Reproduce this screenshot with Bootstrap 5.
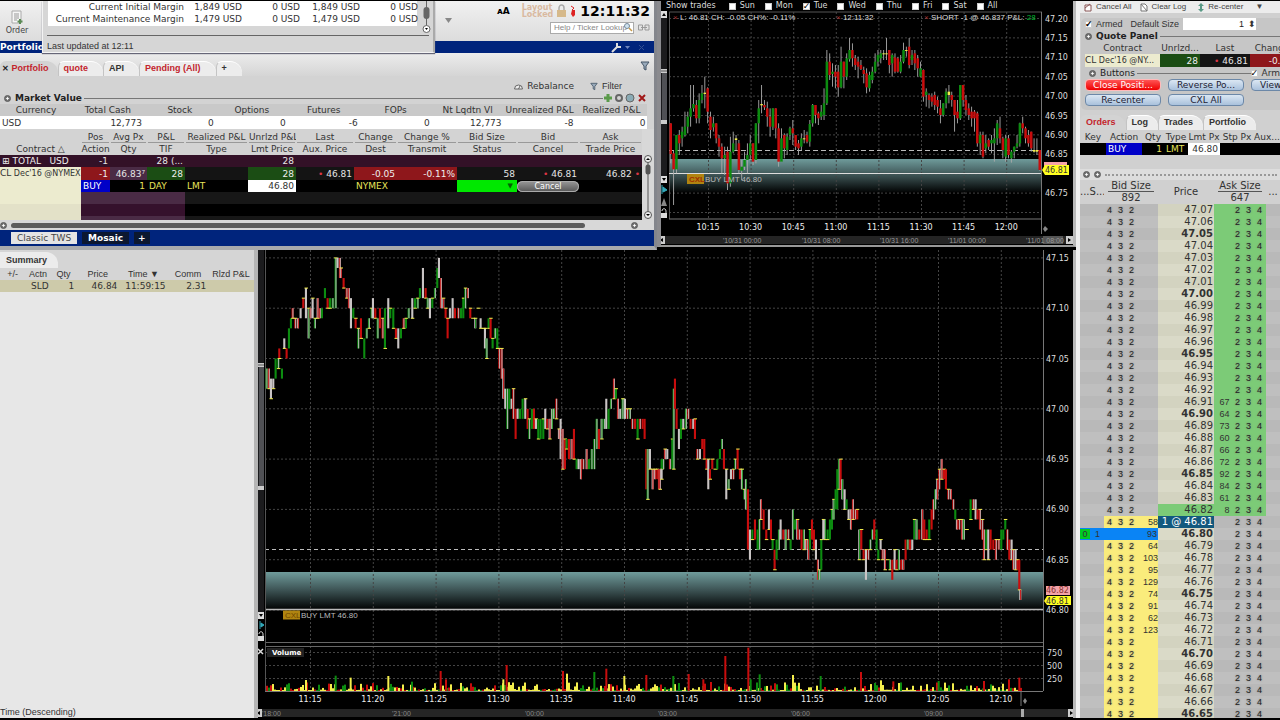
<!DOCTYPE html>
<html lang="en">
<head>
<meta charset="utf-8">
<meta name="viewport" content="width=device-width, initial-scale=1">
<title>Trader Workstation</title>
<link rel="stylesheet" href="https://cdn.jsdelivr.net/npm/bootstrap@5.3.0/dist/css/bootstrap.min.css">
<style>
body{background:#000;color:#333;font:9px/12px "DejaVu Sans",sans-serif;overflow:hidden}
.arial{font-family:"Liberation Sans",Arial,sans-serif}
.desk{display:grid;grid-template-columns:1076fr 204fr;height:100vh;padding:1px 0 2px}
.work-area{min-width:0}
.top-area{display:grid;grid-template-columns:657fr 419fr}
.low-area{display:grid;grid-template-columns:254fr 822fr;flex:1;min-height:0}
table{table-layout:fixed;width:100%;border-collapse:collapse}
th{font-weight:400;text-align:center}
td,th{padding:0 2px;white-space:nowrap;overflow:hidden;line-height:12px}
td{text-align:right}
button,input{font:inherit}
svg{display:block}
/* portfolio window */
.folio{background:#d3d3d3;border-right:3px solid #84868c;border-bottom:4px solid #a9abad;height:249px}
.toolbar-top{height:40px;background:linear-gradient(#f1f1f1,#dcdcdc)}
.order-btn{width:34px;border:0;background:none;padding:5px 0 0;font-size:8px;color:#444}
.clock{font-size:14px;font-weight:700;line-height:20px;color:#000}
.locked{font-size:8px;line-height:7px;font-weight:700;color:#d9b9a0}
.help-box{width:84px;height:12px;border:1px solid #aaa;background:#fff;font-size:8px;line-height:10px;padding:0 3px;color:#777}
.help-box::placeholder{color:#888;opacity:1}
.blue-bar{background:#00247c;color:#fff;height:12px;line-height:13px}
.popup-box{left:42px;top:0;width:393px;height:52px;background:#d6d6d6;border:1px solid #f3f3f3;border-top:0;border-right:2px solid #aaa;box-shadow:0 1px 1px #667;z-index:2}
.popup-sheet{background:#fff;margin:0 16px 0 5px;height:25px}
.popup-sheet table{width:372px}
.popup-line{border-top:1px solid #666;margin:9px 4px 0 4px}
.tabstrip{height:23px;background:linear-gradient(#ececec,#d5d5d5);padding-top:8px}
.tab-link{background:#ececec;color:#333;font-weight:700;text-decoration:none;border-radius:6px 12px 0 0;padding:0 15px 0 5px;height:15px;line-height:13px;border-top:1px solid #fff;border-left:1px solid #c4c4c4}
.tab-link.on{background:#d3d3d3;color:#c3242c;padding:0 9px 0 1px;border-color:transparent}
.tab-link.hot{color:#c3242c}
.tab-x{font-size:8px;color:#222}
.heading-line{font-size:9px;font-weight:700;color:#222;height:12px;line-height:12px}
.heading-line::after{content:"";flex:1;height:1px;background:#777;margin-left:2px}
.dot-btn{width:7px;height:7px;border:1px solid #555;border-radius:50%;background:radial-gradient(#fff 25%,#777 40%);flex:none;padding:0}
.market{width:99%}
.market th{background:#c9c9c9}
.market td{background:#fff;height:13px}
.market td:first-child{text-align:left}
.util-row{height:16px}
.split span{display:block;border-bottom:1px solid #999;height:12px;margin:0 1px}
.split th{padding:0;height:26px;vertical-align:bottom}
.holdings td{height:12px;line-height:12px;color:#e6e6e6;background:#141414}
.holdings .total td{background:#331127}
.holdings .blank td{background:#171717}
.holdings .deep td{background:#000}
.holdings .total td:first-child{text-align:left;color:#eee}
.holdings .cream{background:#ecebcf!important;color:#333!important;text-align:left!important;font-size:8px;padding:0}
.holdings .deep .cream,.holdings .short .cream{background:#e3e1c8!important}
.cream span{font-size:9px}
.holdings .plum{background:#4a2b45!important}
.holdings .deep .plum{background:#35112c!important}
.holdings .short td{height:4px;line-height:4px}
.loss{background:#8e171b!important;color:#eee!important}
.gain{background:#1b4d14!important;color:#eee!important}
.buy{background:#0000c8!important;color:#fff!important;text-align:left!important}
.holdings .ylw td,.ylw td{background:#000;color:#e7e35a;text-align:left}
.paper{background:#fff!important;color:#333!important;text-align:right!important}
.pill{border:0;border-radius:7px;background:linear-gradient(#999,#555);box-shadow:inset 0 0 0 1px #aaa;color:#fff;font-size:8px;line-height:11px;width:100%;height:11px;padding:0;display:block}
.status-select{appearance:none;border:0;background:#00e800;width:100%;height:12px;display:block;padding:0}
.status-cell::after{content:"▼";position:absolute;right:4px;top:0;font-size:7px;color:#056005}
.vbar{width:12px;background:#d8d8d8;flex:none}
.hbar{height:10px;background:#d8d8d8}
.hbar i{height:5px;border-radius:3px;background:#5c5c5c;margin-right:7%}
.space-bar{background:#00247c;height:16px;padding:2px 0 0 11px}
.space-bar a{height:12px;line-height:12px;padding:0 6px;text-decoration:none;background:#e4e4e4;color:#444;margin-right:5px}
.space-bar a.dark{background:#0c1830;color:#fff;font-weight:700}
/* charts */
.chart-pane{background:#000;border-left:4px solid #8b8b8f}
.small-chart{border-right:3px solid #b9b9b9;border-bottom:2px solid #999;height:246px}
.days{height:10px;color:#ddd;font-size:8px;line-height:10px;padding-left:5px;gap:10px}
.days label{display:flex;gap:4px;align-items:center}
.days label:first-of-type{margin-left:3px}
input[type=checkbox]{appearance:none;width:7px;height:7px;background:#fff;margin:0;line-height:7px;font-size:9px;color:#000;border:1px solid #ccc;flex:none}
input[type=checkbox]:checked::before{content:"✓";display:block;margin:-1px 0 0 -1px;font-weight:700}
.big-chart{border-left:4px solid #b5b5b5;border-right:3px solid #b9b9b9}
svg text{font-family:"DejaVu Sans",sans-serif;font-size:8px}
svg .a{font-family:"Liberation Sans",Arial,sans-serif}
svg .tiny{font-size:7px}
/* summary */
.summary-pane{background:#e7e7e7}
.summary-pane .strip{background:#d5d5d5;padding-top:2px}
.summary-tab{background:#ececec;width:58px;height:16px;border-radius:0 12px 0 0;padding:2px 6px;font-weight:700;color:#333}
.fill-row{font-family:"DejaVu Sans",sans-serif}
.fill-row td{background:#cdcaaa;height:12px}
/* right side */
.side-pane{background:#d0d0d0;border-left:4px solid #f0f0f0;overflow:hidden;min-width:0}
.side-tools{height:12px;background:#ececec;color:#444;white-space:nowrap;font-size:8px;gap:8px}
.side-tools button{border:0;background:none;padding:0;color:#444;display:flex;align-items:center;gap:4px}
.size-box{width:73px;height:12px;border:0;background:#fff;text-align:right;padding-right:12px;color:#222}
.quote-box{background:#c6c6c6;height:92px;margin:5px 0 5px 1px;border-radius:5px 0 0 5px}
.quote-box td{height:12px}
.quote-table{width:105%;margin-left:4px}
.quote-table th{padding:0}
.btn-row{gap:7px;padding-left:4px;margin-bottom:3px}
.blue-btn{width:76px;height:12px;flex:none;border:1px solid #6c88a8;border-radius:4px;background:linear-gradient(#dbe7f3,#a9c1dc);color:#223;font-size:9px;line-height:9px;padding:0}
.blue-btn.red-btn{background:linear-gradient(#f55,#e00);border-color:#fbb;color:#fff}
.side-tabs{height:16px}
.side-tabs .tab-link{padding:0 10px 0 5px}
.orders-table th,.orders-table td{height:12px}
.dotted-row{height:12px;background:#ddd;padding:2px 3px;margin-top:14px}
.dotted-row::after{content:"";flex:1;border-bottom:2px dotted #999;height:5px}
.ladder-head th{font-size:10px;height:24px;padding:0 4px}
.ladder-head span{display:block;border-bottom:1px solid #555;line-height:11px}
.ladder-body td{height:12px;font-size:10px;padding:0 1px 0 0;background:#bfbfbf;color:#333}
.ladder-body tr:nth-child(odd) td{background:#b9b9b9}
.ladder-body .num{font:9px/12px "Liberation Sans",Arial,sans-serif}
.ladder-body .num b{font-weight:400;display:inline-block;width:11px;text-align:center;color:#222;text-shadow:0 0 2px #777}
.own-flag{background:#0c2}
.depth{display:inline-block;width:21px}
.ladder-body td.px{background:#dadac8}
.ladder-body tr:nth-child(odd) td.px{background:#d3d3c0}
.ladder-body td.ask-on,.ladder-body tr:nth-child(odd) td.ask-on{background:#7ccb77}
.ladder-body td.bid-on,.ladder-body tr:nth-child(odd) td.bid-on{background:#faec7c}
.ladder-body td.last-px,.ladder-body tr:nth-child(odd) td.last-px{background:#12597e;color:#fff}
.ladder-body td.mine,.ladder-body tr:nth-child(odd) td.mine{background:#0a84f5}
</style>
</head>
<body>
<main class="desk">
 <div class="work-area d-flex flex-column">
  <div class="top-area">
   <section class="folio position-relative overflow-hidden">
    <div class="toolbar-top d-flex justify-content-between">
     <button class="order-btn"><svg class="mx-auto" width="14" height="15" viewBox="0 0 14 15"><path d="M2 1h9v12H2z" fill="#f6f6f6" stroke="#aaa"/><path d="M4 4h5M4 6h5M4 8h5M4 10h3" stroke="#999"/><path d="M10 9v5M7.500 11.500h5" stroke="#5a8a55" stroke-width="2"/></svg>Order</button>
     <div class="d-flex flex-column align-items-end pe-1">
      <div class="d-flex align-items-center gap-1">
       <b class="text-black me-2">ᴀA</b>
       <span class="locked">Layout<br>Locked</span>
       <svg width="9" height="14" viewBox="0 0 9 14"><path d="M2 7V4a2.500 3 0 0 1 5 0v3" fill="none" stroke="#aaa" stroke-width="1.500"/><path d="M0 6h9v7H0z" fill="#d6b98a"/></svg>
       <svg width="6" height="14" viewBox="0 0 6 14"><path d="M1 2l3 2-2 2" stroke="#d22" fill="none"/><path d="M2 6h3v5l-2 2-2-3z" fill="#d22"/></svg>
       <span class="clock">12:11:32</span>
      </div>
      <div class="d-flex align-items-center gap-1"><div class="position-relative"><input class="help-box arial" aria-label="Help or ticker lookup" placeholder="Help / Ticker Lookup"><svg class="position-absolute end-0 top-0" width="11" height="11" viewBox="0 0 11 11"><circle cx="4" cy="5" r="2.500" fill="#cfe3f0" stroke="#789"/><path d="M6 7l3 3" stroke="#c79a4a" stroke-width="1.500"/></svg></div><svg width="12" height="7" viewBox="0 0 12 7"><path d="M.5 1h4v5h-4zM7 1h4v5H7zM3 3.500h6" fill="none" stroke="#999"/></svg></div>
     </div>
    </div>
    <div class="blue-bar d-flex justify-content-between pe-2"><b>Portfolio</b><svg width="36" height="12" viewBox="0 0 36 12"><path d="M2 11L8 5M7 2v4h4" stroke="#ddd" stroke-width="2" fill="none"/><path d="M15 5h5l-2.500 3z" fill="#6f86bd"/><path d="M29 4l5 5m0-5l-5 5" stroke="#334f93"/></svg></div>
    <div class="popup-box position-absolute">
     <div class="popup-sheet"><table><colgroup><col style="width:138px"><col style="width:58px"><col style="width:58px"><col style="width:60px"><col style="width:58px"></colgroup>
      <tr><td>Current Initial Margin</td><td>1,849 USD</td><td>0 USD</td><td>1,849 USD</td><td>0 USD</td></tr>
      <tr><td>Current Maintenance Margin</td><td>1,479 USD</td><td>0 USD</td><td>1,479 USD</td><td>0 USD</td></tr></table></div>
     <svg class="position-absolute top-0 end-0" width="13" height="34" viewBox="0 0 13 34"><path d="M6.500 0v26" stroke="#666"/><path d="M6.500 9v6" stroke="#666" stroke-width="6" stroke-linecap="round"/><circle cx="6.500" cy="28" r="3.500" fill="#fff" stroke="#666"/><path d="M5 27h3l-1.500 2z"/></svg>
     <div class="popup-line"></div><div class="arial ps-1 pt-1">Last updated at 12:11</div>
    </div>
    <svg class="position-absolute" style="left:68%;top:16px" width="7" height="6" viewBox="0 0 7 6"><path d="M0 1h7L3.500 6z" fill="#888"/></svg>
    <nav class="tabstrip d-flex arial">
     <a href="#" class="tab-link on"><span class="tab-x">✕</span> Portfolio</a><a href="#" class="tab-link hot">quote</a><a href="#" class="tab-link">API</a><a href="#" class="tab-link hot">Pending (All)</a><a href="#" class="tab-link">+</a>
     <svg class="ms-auto me-1" width="10" height="10" viewBox="0 0 10 10"><path d="M1 1l3 4v3l2 1V5l3-4z" fill="#9ab" stroke="#456"/></svg>
    </nav>
    <div class="util-row d-flex justify-content-end align-items-center gap-3 pt-1 pe-4"><span class="d-flex align-items-center gap-1"><svg width="9" height="7" viewBox="0 0 9 7"><path d="M.5 6a4 4 0 0 1 8 0zM4.500 6L6 3" fill="#eee" stroke="#666"/></svg>Rebalance</span><span class="arial me-2 d-flex align-items-center gap-1"><svg width="8" height="9" viewBox="0 0 10 10"><path d="M1 1l3 4v3l2 1V5l3-4z" fill="#9ab" stroke="#456"/></svg>Filter</span></div>
    <div class="d-flex align-items-center ps-1 pe-2"><span class="dot-btn me-1"></span><div class="heading-line d-flex align-items-center flex-fill">Market Value</div><svg width="43" height="10" viewBox="0 0 43 10"><path d="M5 1v8M1 5h8" stroke="#5a9a4a" stroke-width="3"/><circle cx="16" cy="5" r="3" fill="none" stroke="#666" stroke-width="2"/><circle cx="27" cy="5" r="4" fill="#8aabb5" stroke="#666"/><path d="M36 2l6 6m0-6l-6 6" stroke="#a01818" stroke-width="2"/></svg></div>
    <table class="market"><thead><tr><th>Currency</th><th>Total Cash</th><th>Stock</th><th>Options</th><th>Futures</th><th>FOPs</th><th>Nt Lqdtn Vl</th><th>Unrealized P&amp;L</th><th>Realized P&amp;L</th></tr></thead>
     <tbody><tr><td>USD</td><td>12,773</td><td>0</td><td>0</td><td>-6</td><td>0</td><td>12,773</td><td>-8</td><td>0</td></tr></tbody></table>
    <div class="d-flex">
     <table class="holdings flex-fill"><colgroup id="cols"></colgroup>
      <thead><tr class="split"><th>Contract △</th><th><span>Pos</span>Action</th><th><span>Avg Px</span>Qty</th><th><span>P&amp;L</span>TIF</th><th><span>Realized P&amp;L</span>Type</th><th><span>Unrlzd P&amp;L</span>Lmt Price</th><th><span>Last</span>Aux. Price</th><th><span>Change</span>Dest</th><th><span>Change %</span>Transmit</th><th><span>Bid Size</span>Status</th><th><span>Bid</span>Cancel</th><th><span>Ask</span>Trade Price</th></tr></thead>
      <tbody>
       <tr class="total"><td>⊞ TOTAL &nbsp; USD</td><td>-1</td><td></td><td>28 (...</td><td></td><td>28</td><td></td><td></td><td></td><td></td><td></td><td></td></tr>
       <tr><td class="cream"><span>CL</span> Dec'16 @NYMEX</td><td class="loss">-1</td><td class="plum">46.83⁷</td><td class="gain">28</td><td></td><td class="gain">28</td><td><span class="text-danger">•</span> 46.81</td><td class="loss">-0.05</td><td class="loss">-0.11%</td><td>58</td><td><span class="text-danger">•</span> 46.81</td><td>46.82 <span class="text-danger">•</span></td></tr>
       <tr class="ylw"><td class="cream"></td><td class="buy">BUY</td><td class="text-end">1</td><td>DAY</td><td>LMT</td><td class="paper">46.80</td><td></td><td>NYMEX</td><td></td><td class="p-0"><div class="status-cell position-relative"><select class="status-select" aria-label="Status"></select></div></td><td class="p-0"><button class="pill">Cancel</button></td><td></td></tr>
       <tr class="blank"><td class="cream"></td><td class="plum"></td><td class="plum"></td><td class="plum"></td><td colspan="8"></td></tr>
       <tr class="deep"><td class="cream"></td><td class="plum"></td><td class="plum"></td><td class="plum"></td><td colspan="8"></td></tr>
       <tr class="blank short"><td class="cream"></td><td class="plum"></td><td class="plum"></td><td class="plum"></td><td colspan="8"></td></tr>
      </tbody></table>
     <div class="vbar d-flex align-items-end"><svg width="12" height="66" viewBox="0 0 12 66"><path d="M6 6v55" stroke="#555"/><path d="M6 13v5" stroke="#555" stroke-width="5" stroke-linecap="round"/><circle cx="6" cy="5" r="3.500" fill="#eee" stroke="#555"/><circle cx="6" cy="61" r="3.500" fill="#eee" stroke="#555"/><path d="M4 6h4L6 4zM4 60h4l-2 2z"/></svg></div>
    </div>
    <div class="hbar d-flex align-items-center"><span class="dot-btn"></span><i class="flex-fill ms-1"></i><span class="dot-btn me-3"></span></div>
    <nav class="space-bar d-flex"><a href="#">Classic TWS</a><a href="#" class="dark">Mosaic</a><a href="#" class="dark px-1">+</a></nav>
   </section>
   <section class="chart-pane small-chart overflow-hidden">
    <div class="days d-flex"><span>Show trades</span><label><input type="checkbox">Sun</label><label><input type="checkbox">Mon</label><label><input type="checkbox" checked>Tue</label><label><input type="checkbox">Wed</label><label><input type="checkbox">Thu</label><label><input type="checkbox">Fri</label><label><input type="checkbox">Sat</label><label><input type="checkbox">All</label></div>
    <svg id="hourly" width="100%" viewBox="661 11 412 234"></svg>
   </section>
  </div>
  <div class="low-area">
   <section class="summary-pane d-flex flex-column arial">
    <div class="strip"><div class="summary-tab">Summary</div>
    <table><colgroup><col style="width:10%"><col style="width:10%"><col style="width:10%"><col style="width:17%"><col style="width:19%"><col style="width:16%"><col style="width:18%"></colgroup>
     <thead><tr><th>+/-</th><th>Actn</th><th>Qty</th><th>Price</th><th>Time ▼</th><th>Comm</th><th>Rlzd P&amp;L</th></tr></thead>
     <tbody><tr class="fill-row"><td></td><td>SLD</td><td>1</td><td>46.84</td><td>11:59:15</td><td>2.31</td><td></td></tr></tbody></table></div>
    <div class="mt-auto">Time (Descending)</div>
   </section>
   <section class="chart-pane big-chart overflow-hidden"><svg id="tick" width="100%" viewBox="258 250 815 467"></svg></section>
  </div>
 </div>
 <aside class="side-pane d-flex flex-column">
  <div class="side-tools d-flex align-items-center arial ps-1"><button><svg width="8" height="9" viewBox="0 0 8 9"><path d="M1 2h6v6H1zM1 5l5-4" fill="#fff" stroke="#855"/></svg>Cancel All</button><button><svg width="8" height="9" viewBox="0 0 8 9"><path d="M1 1h4l2 2v5H1z" fill="#fff" stroke="#777"/><path d="M1 1l6 7" stroke="#777"/></svg>Clear Log</button><button class="ms-1"><svg width="6" height="9" viewBox="0 0 6 9"><path d="M3 0l3 3H0zM3 9l3-3H0zM2 3h2v3H2z" fill="#5a9a86"/></svg>Re-center</button><span class="ms-1">▼</span></div>
  <div class="quote-box overflow-hidden">
   <div class="d-flex gap-1 align-items-center ps-1 arial"><label class="d-flex align-items-center gap-1"><input type="checkbox" checked>Armed</label><label for="sz" class="ms-1">Default Size</label><div class="position-relative"><input id="sz" class="size-box" value="1"><span class="position-absolute end-0 top-0">⬍</span></div></div>
   <div class="d-flex align-items-center ps-1"><span class="dot-btn me-1"></span><div class="heading-line d-flex align-items-center flex-fill">Quote Panel</div></div>
   <table class="quote-table"><colgroup><col style="width:36%"><col style="width:19%"><col style="width:24%"><col style="width:21%"></colgroup><thead><tr><th>Contract</th><th>Unrlzd...</th><th>Last</th><th>Change</th></tr></thead><tbody class="holdings"><tr><td class="cream"><span>CL</span> Dec'16 @NY...</td><td class="gain">28</td><td><span class="text-danger">•</span> 46.81</td><td class="loss">-0.05</td></tr></tbody></table>
   <div class="d-flex align-items-center ps-2"><span class="dot-btn me-1"></span><div class="heading-line d-flex align-items-center flex-fill fw-normal">Buttons</div><label class="d-flex align-items-center gap-1"><input type="checkbox" checked>Arm</label></div>
   <div class="btn-row d-flex"><button class="blue-btn red-btn">Close Positi...</button><button class="blue-btn">Reverse Po...</button><button class="blue-btn text-start ps-2">View</button></div>
   <div class="btn-row d-flex"><button class="blue-btn">Re-center</button><button class="blue-btn">CXL All</button></div>
  </div>
  <nav class="side-tabs d-flex arial"><a href="#" class="tab-link on">Orders</a><a href="#" class="tab-link">Log</a><a href="#" class="tab-link">Trades</a><a href="#" class="tab-link">Portfolio</a></nav>
  <table class="orders-table"><colgroup><col style="width:13%"><col style="width:18%"><col style="width:11%"><col style="width:12%"><col style="width:16%"><col style="width:17%"><col style="width:13%"></colgroup><thead><tr><th>Key</th><th>Action</th><th>Qty</th><th class="p-0">Type</th><th class="p-0">Lmt Px</th><th class="p-0">Stp Px</th><th class="p-0">Aux...</th></tr></thead><tbody><tr class="ylw"><td></td><td class="buy">BUY</td><td class="text-end">1</td><td>LMT</td><td class="paper">46.80</td><td></td><td></td></tr></tbody></table>
  <div class="dotted-row d-flex"><span class="dot-btn me-1"></span><span class="dot-btn me-1"></span></div>
  <div class="flex-fill overflow-hidden">
   <table><colgroup><col style="width:12%"><col style="width:27%"><col style="width:28%"><col style="width:26%"><col style="width:7%"></colgroup>
    <thead class="ladder-head"><tr><th class="p-0">...S...</th><th class="px-1"><span>Bid Size</span>892</th><th>Price</th><th class="px-1"><span>Ask Size</span>647</th><th class="p-0">...</th></tr></thead>
    <tbody id="ladder" class="ladder-body"></tbody></table>
  </div>
 </aside>
</main>
<script src="https://cdn.jsdelivr.net/npm/bootstrap@5.3.0/dist/js/bootstrap.bundle.min.js"></script>
<script>
document.getElementById('cols').innerHTML=[81,29,37,38,63,48,58,43,60,60,62,63].map(w=>`<col style="width:${w/6.42}%">`).join('');
// price ladder
const askSize={4691:67,4690:64,4689:73,4688:60,4687:66,4686:72,4685:92,4684:84,4683:61,4682:8};
const bidSize={4681:58,4680:93,4679:64,4678:103,4677:95,4676:129,4675:74,4674:91,4673:62,4672:123};
let rows='';
for(let p=4707;p>=4665;p--){
 const t=(p/100).toFixed(2),mine=p===4680,bid=p<=4681,m=mine?' mine':'';
 rows+=`<tr><td class="num text-start${m}">${mine?'<span class="own-flag">&nbsp;0&nbsp;</span>&nbsp; 1':''}</td><td class="num${m}${bid&&!mine?' bid-on':''}">${mine?93:`<b>4</b><b>3</b><b>2</b><span class="depth">${bidSize[p]||''}</span>`}</td><td class="px${p===4682?' ask-on':''}${p===4681?' last-px':''}">${p%5===0?`<strong>${t}</strong>`:p===4681?'1 @ '+t:t}</td><td class="num${bid?'':' ask-on'}">${askSize[p]||''} <b>2</b><b>3</b><b>4</b></td><td></td></tr>`;
}
document.getElementById('ladder').innerHTML=rows;
// drawing helpers
const C={g:'#0c8c10',r:'#c80d0d',w:'#c9c4c4',y:'#f4ee4c'};
const R=(x,y,w,h,f)=>`<rect x="${x}" y="${y}" width="${w}" height="${h}" fill="${f}"/>`;
const L=(a,b,c,d,s,x='')=>`<path d="M${a} ${b}L${c} ${d}" stroke="${s}" ${x}/>`;
const T=(x,y,s,f='#ddd',x2='')=>`<text x="${x}" y="${y}" fill="${f}" ${x2}>${s}</text>`;
const band='<linearGradient id="band" x1="0" y1="0" x2="0" y2="1"><stop stop-color="#6f9b9b"/><stop offset=".45" stop-color="#41595a"/><stop offset="1" stop-color="#030505"/></linearGradient>';
const dash='stroke-dasharray="2 2"';
// one-minute chart
let s=`<defs>${band}</defs>`+R(669,159,372,33,'url(#band)');
const yA=p=>18.500+(47.20-p)*388;
for(let i=0;i<11;i++){const p=47.20-i*.05,y=yA(p);s+=L(669,y,1041,y,'#444',dash);if(i<10&&i!=8)s+=T(1045,y+3,p.toFixed(2));}
for(let i=0;i<8;i++){const x=708.500+i*42.600,m=615+i*15;s+=L(x,12,x,219,'#444',dash)+T(x-12,230,Math.floor(m/60)+':'+String(m%60).padStart(2,'0'),'#eee');}
s+=L(669,12,1042,12,'#555')+L(669.5,12,669.5,219,'#555')+L(669,219,1042,219,'#777')+L(1041.5,12,1041.5,234,'#777')+L(669,150.5,1041,150.5,'#bbb','stroke-dasharray="5 3"')+L(669,173.5,1041,173.5,'#ddd');
const mins=`r370-462 370-490,r460-508 450-615,g405-508 405-520,r405-430 390-465,g395-415 380-440,g380-405 335-410,g350-380 335-400,g325-350 255-380,g312-325 255-335,r315-355 300-370,g300-355 280-370,g280-300 255-310,y278-282 230-325,r265-335 262-370,r350-390 335-415,g370-382 350-395,r370-415 370-430,r415-440 405-470,r440-475 430-520,g465-475 440-525,r455-550 440-570,g455-550 410-560,g430-455 395-460,y415-420 405-450,r430-510 420-520,g500-512 480-540,g480-500 455-510,g465-480 430-520,g430-465 405-480,r430-485 430-495,g370-480 370-490,g325-370 300-430,y312-316 255-340,r315-322 300-330,r325-350 305-380,r350-380 325-410,g325-380 325-390,r325-385 325-415,r385-485 370-500,g415-485 385-485,r405-445 400-475,g410-450 400-465,g385-405 380-420,r385-400 360-435,r405-440 405-450,r430-445 420-465,g415-440 400-450,y415-418 390-430,r405-425 395-430,g372-425 360-440,g315-370 312-380,r315-345 315-370,r340-355 335-375,g335-350 315-360,g310-345 265-360,g185-310 150-315,r185-225 160-240,g215-222 190-260,r215-230 195-265,r215-262 195-290,g185-262 140-265,r185-230 185-265,g175-230 160-240,g150-178 114-185,r150-175 130-200,r175-195 165-210,r185-200 170-235,r195-207 180-210,r210-222 200-250,r220-262 205-280,g225-265 215-275,g215-240 200-250,g185-215 160-220,g165-185 150-200,g160-175 150-190,y160-163 150-180,y160-163 114-180,r150-195 150-220,g165-190 160-230,r172-215 160-220,r175-215 172-218,g185-215 165-220,g150-185 128-190,y150-153 140-170,r140-195 114-205,g165-180 150-195,r160-190 150-210,r175-205 165-230,g205-230 185-232,r210-290 208-305,g275-285 265-320,r285-300 280-325,r290-305 280-320,r285-315 275-330,r300-320 290-340,r325-345 300-370,g310-345 310-350,g275-310 265-325,y275-285 255-310,r285-300 275-320,r300-345 300-395,r335-355 300-370,g255-355 255-360,r255-300 255-320,r300-330 285-345,r325-345 310-360,r335-355 320-380,r335-355 330-395,r340-430 335-440,g405-430 395-465,r405-470 395-475,g430-445 405-460,r420-440 415-450,g420-430 405-460,g415-430 385-485,g370-415 360-435,r385-415 350-430,r415-450 410-475,g415-470 405-485,r415-465 405-475,g455-475 450-488,g440-455 440-475,g430-440 405-445,g370-430 368-440,r370-385 350-400,r385-415 380-430,r405-430 390-440,r395-445 395-455,y450-455 415-458,y450-455 415-465,r450-510 450-512`.split(',');
mins.forEach((v,i)=>{const[a,b]=v.slice(1).split(' '),[t,u]=a.split('-'),[h,l]=b.split('-'),x=670.7+i*369/(mins.length-1);s+=R(x-.4,h/3,.9,(l-h)/3,'#aaa')+R(x-1.2,t/3,2.500,(u-t)/3,C[v[0]]);});
s+=R(687,174,17,10,'#b08410')+T(689,182,'CXL','#a03000','class="a" font-weight="700"')+T(705,182,'BUY LMT 46.80','#bbb','class="a"');
s+='<g class="a">'+T(673,20,'<tspan fill="#a33">×</tspan> L: 46.81 CH: -0.05 CH%: -0.11%','#ddd','class="a"')+T(836,20,'<tspan fill="#a33">×</tspan> 12:11:32','#ddd','class="a"')+T(924,20,'<tspan fill="#a33">×</tspan> SHORT -1 @ 46.837 P&amp;L: <tspan fill="#0b3">28</tspan>','#ddd','class="a"')+'</g>';
s+=R(1044,162,23,5,'#f4a3a8')+'<path d="M1042 170l3-5h24v10h-24z" fill="#ffff20"/>'+T(1045,173,'46.81','#333');
// scale slider and tool glyphs at the left of each chart
const rail=(x,a,b,k1,k2)=>R(x,a,6,b-a,'#1b1b1d')+R(x+1,k1,5,k2-k1,'#505155')+R(x,k1-2,6,4,'#ccc')+L(x,k1,x+6,k1,'#555')+R(x,k2-2,6,4,'#ccc')+R(x,b,6,7,'#ddd')+`<path d="M${x+1} ${b+2}h4l-2 3z"/>`;
const lock=(x,y)=>R(x,y+4,6,5,'#ddd')+`<path d="M${x+1} ${y+2}c0-3 4-3 4 0v2" fill="none" stroke="#ddd"/>`;
s+=rail(661,18,176,71,122)+R(661,11,6,7,'#ddd')+'<path d="M662 16h4l-2-3z"/>'+'<path d="M662 185v9m1-7l4 3-4 2z" stroke="#3ab" fill="#3ab"/><path d="M661 206l3-8 3 8z" fill="#888"/>'+lock(661,209);
const hs=(x,y,w)=>R(x,y-4,w,8,'#252525')+R(x,y-4,7,8,'#ccc')+`<path d="M${x+5} ${y-2}v4l-3-2z"/>`+R(x+w-7,y-4,7,8,'#ccc')+`<path d="M${x+w-5} ${y-2}v4l3-2z"/>`;
s+=hs(658,240,415)+R(1043,236,20,8,'#555');
[[723,'10/31 00:00'],[802,'10/31 08:00'],[880,'10/31 16:00'],[948,'11/01 00:00'],[1026,'11/01 08:00']].forEach(a=>s+=T(a[0],243,"'"+a[1],'#999','class="a tiny"'));
s+='<path d="M1045 226l3 3-3 3-2-3z" fill="#888"/>';
document.getElementById('hourly').innerHTML=s;
// ten-second chart: x, high tick, low tick (above 46.80), colour
const A=`50 24 22 g,57 24 22 r,63 23 21 w,70 23 22 w,77 25 23 g,85 25 24 g,88 26 25 r,96 24 23 g,103 27 26 w,110 26 25 r,117 28 26 g,123 29 28 g,128 30 29 r,136 29 28 r,144 29 28 w,152 30 29 w,160 31 30 r,168 32 29 w,176 30 27 w,182 30 29 r,188 31 29 w,195 29 28 g,203 31 29 w,210 30 29 r,216 30 29 g,225 32 31 g,233 31 30 r,240 31 30 g,248 31 30 g,257 35 30 g,263 35 34 w,270 35 33 r,273 34 33 w,281 33 32 r,290 32 31 r,297 32 30 r,303 31 28 w,310 30 29 g,317 29 28 r,325 28 26 g,333 29 27 r,343 27 25 g,350 28 27 g,357 29 28 g,365 30 29 g,369 31 29 w,376 30 29 r,383 29 27 g,390 30 28 r,398 29 27 r,405 30 26 g,415 31 28 w,421 30 29 g,430 30 28 g,438 28 27 r,445 28 26 w,453 28 27 g,461 29 28 r,468 29 28 g,476 30 29 g,487 31 29 w,495 31 30 g,503 31 30 g,510 32 31 g,519 34 31 w,527 32 31 r,533 31 30 g,540 31 29 w,547 31 30 g,555 32 31 g,562 34 32 g,567 35 33 w,573 33 30 r,580 31 30 w,587 30 29 r,593 29 27 r,600 30 29 w,608 31 29 w,615 30 29 r,625 30 29 r,633 30 29 g,640 31 29 g,646 32 30 g,654 32 31 r,661 30 29 r,668 29 29 y,676 29 28 w,684 30 30 y,692 29 28 w,700 28 28 y,705 28 26 w,710 27 25 g,716 29 28 g,722 29 27 r,728 27 26 g,735 28 27 g,742 28 26 g,748 26 24 r,755 26 23 r,760 24 21 w,766 22 20 w,772 22 18 g,778 22 20 g,785 21 20 w,790 22 19 r,797 20 17 r,803 20 19 w,810 20 19 g,818 21 19 g,826 21 19 w,833 20 18 r,838 19 17 g,846 20 18 g,852 20 18 r,858 19 18 w,865 19 17 g,872 19 17 g,880 19 17 g,886 20 18 w,892 19 18 r,899 19 17 w,906 20 18 w,912 20 19 w,919 21 19 r,927 18 17 w,932 19 15 w,938 18 14 r,945 17 14 r,950 17 16 g,957 17 15 r,965 17 15 w,972 18 15 r,980 15 14 g,986 15 14 w,993 15 13 w,1000 15 14 r,1010 16 14 w,1017 15 14 g,1025 16 14 g,1033 17 14 g,1040 19 16 g,1047 18 16 r,1055 19 17 w,1063 19 18 g,1069 21 18 w,1076 20 18 g,1083 21 20 g,1092 23 21 r,1098 22 21 g,1104 21 19 r,1111 20 19 w,1118 21 19 g,1125 21 19 w,1132 20 19 r,1140 20 19 g,1147 19 18 r,1155 19 18 r,1163 19 17 g,1170 19 18 r,1178 19 18 r,1184 19 17 r,1189 16 12 r,1193 16 11 g,1200 16 14 w,1208 14 12 w,1215 14 13 w,1222 14 13 r,1227 14 12 r,1235 15 14 g`;
const B=`0 14 12 r,5 14 13 w,10 15 14 g,15 16 15 r,22 16 15 w,30 15 14 r,37 17 14 g,41 22 14 g,45 23 20 r,50 20 18 r,57 18 16 w,63 19 17 g,70 19 18 w,78 20 18 g,85 20 19 r,92 19 18 r,100 19 18 w,105 19 17 r,112 16 15 r,120 16 15 w,127 17 16 r,133 17 15 r,140 15 14 r,145 15 12 w,150 14 13 r,157 15 14 r,165 14 14 y,172 15 14 g,180 16 15 g,186 17 16 g,192 16 14 r,199 14 11 w,206 13 12 g,213 14 13 w,220 14 13 r,226 15 14 g,233 16 14 r,240 14 13 r,246 14 12 w,253 12 11 g,258 13 10 w,264 12 6 r,270 8 5 w,277 8 7 g,285 9 7 r,293 8 6 g,298 9 6 g,303 11 9 w,311 10 8 r,319 8 7 r,327 10 8 w,333 9 7 r,338 7 6 g,344 6 4 r,350 7 5 g,357 8 6 g,362 9 7 w,370 8 7 r,377 8 6 w,385 8 7 r,392 7 6 g,399 10 7 w,405 9 8 g,412 9 7 w,418 8 7 r,425 8 6 r,432 8 6 g,438 7 6 w,445 7 5 w,450 8 6 g,456 9 7 r,462 8 6 r,468 7 5 w,474 5 3 r,478 4 3 g,484 7 4 g,490 9 7 w,495 9 7 w,503 8 7 g,510 9 7 g,516 10 8 g,521 11 9 w,527 12 10 g,532 14 10 g,537 15 12 g,542 15 12 r,547 13 11 w,554 12 10 w,560 11 10 g,566 10 9 w,573 10 8 w,579 11 9 r,586 10 9 r,592 10 9 r,598 8 5 w,604 8 6 r,611 6 5 r,618 6 3 w,625 6 5 r,631 7 6 g,637 8 7 g,643 9 7 r,650 8 6 g,655 6 5 g,662 7 6 w,668 6 5 r,675 6 4 w,682 5 5 y,690 5 4 g,697 5 3 r,704 6 4 w,710 5 4 r,717 6 4 g,724 5 4 r,730 5 4 w,737 7 5 r,743 7 6 g,750 7 6 r,757 7 6 w,763 9 7 g,770 9 7 w,778 8 7 r,787 10 7 w,793 9 7 r,800 8 7 r,808 9 7 g,815 10 8 r,820 11 9 r,826 12 10 g,832 13 11 w,838 14 12 r,845 15 13 w,852 14 13 r,858 14 12 r,865 12 11 r,873 12 11 w,880 11 10 r,886 10 9 g,891 9 8 w,898 9 8 r,906 9 7 r,912 9 7 g,919 8 8 y,932 11 9 g,940 11 10 r,947 11 9 w,953 10 9 r,960 10 8 r,967 9 7 r,972 8 5 r,979 8 6 g,985 8 5 w,992 8 6 r,1000 7 6 r,1008 7 5 r,1016 7 6 r,1024 8 6 g,1030 8 7 g,1036 9 8 g,1042 8 6 r,1048 7 5 r,1055 7 5 w,1060 6 4 r,1067 6 4 w,1073 5 4 r,1078 5 2 r,1081 2 1 w`;
const yB=t=>610-t*10.06;
let q=R(265,572,778,37,'url(#band)');
for(let t=0;t<=35;t+=5){q+=L(265,yB(t),1043,yB(t),'#444',dash)+T(1046,yB(t)+3,(46.8+t/100).toFixed(2));}
for(let i=0;i<12;i++){const x=310.500+i*62.800,m=675+i*5;q+=L(x,250,x,691,'#444',dash)+T(x-12,702,Math.floor(m/60)+':'+String(m%60).padStart(2,'0'),'#eee');}
[[652,750],[665,500],[678,250]].forEach(a=>q+=L(265,a[0]+.5,1043,a[0]+.5,'#444',dash)+T(1047,a[0]+4,a[1]));
q+=L(265,549.5,1043,549.5,'#bbb','stroke-dasharray="4 3"')+L(265,609.5,1043,609.5,'#bbb','stroke-width="1.500"')+L(265,642.5,1043,642.5,'#666')+L(265,646.5,1043,646.5,'#666')+L(265,691.5,1043,691.5,'#777')+L(265.5,250,265.5,691,'#555')+L(1043.5,250,1043.5,691,'#777');
let seed=7;const rnd=()=>(seed=(seed*16807)%2147483647)/2147483647;
[[250,A],[660,B]].forEach(([o,d])=>d.split(',').forEach(v=>{const[x,h,l,c]=v.split(' '),X=o+x/3,y=yB(h),H=(h-l)*10.06;
 if(H){q+=R(X-1.1,y,2.100,H,C[c]);if(rnd()<.45)q+=R(X-.2,y,1,H,c==='w'?C[rnd()<.5?'r':'g']:'#bbb');if(rnd()<.55)q+=R(X-1.5,rnd()<.5?y-.5:y+H-.5,3.500,1,C.y);}else q+=R(X-1.5,y-.5,4,1,C.y);}));
for(let x=266;x<1021;x+=2){const k=rnd(),h=1+Math.pow(rnd(),3)*8;q+=R(x,691-h,2,h,C[k<.55?'y':k<.78?'r':'g']);}
[[250,'257 46 g,168 33 y,302 40 y,415 45 y,486 28 g,572 60 r,588 35 r,770 78 r,760 35 y,939 60 r,951 52 y,1033 57 g,1069 67 r,1123 45 y,1189 48 r'],[660,'40 45 g,86 51 r,130 35 r,196 105 r,265 130 r,272 35 g,299 50 g,399 48 y,482 45 g,603 57 r,663 32 y,700 29 r,836 30 g,972 30 r,1047 35 r,1078 40 r']].forEach(([o,d])=>d.split(',').forEach(v=>{const[x,h,c]=v.split(' ');q+=R(o+x/3-1,691-h/3,2,h/3,C[c]);}));
q+=R(267,648,37,9,'#222')+T(272,655,'Volume','#fff','font-weight="700" class="tiny"')+R(283,610.5,17,9,'#b08410')+T(285,618,'CXL','#6e4600','class="a"')+T(301,618,'BUY LMT 46.80','#bbb','class="a"');
q+=R(1046,586,24,9,'#f4a3a8')+T(1046,593,'46.82','#833')+'<path d="M1044 601l3-5h24v9h-24z" fill="#ffff20"/>'+T(1046,604,'46.81','#333');
q+=rail(258,250,612,365,488)+'<path d="M260 621v8m1-6l3 2-3 2z" stroke="#3ab" fill="#3ab"/>'+lock(258,632)+'<path d="M258 649l5 5m0-5l-5 5" stroke="#ddd" stroke-width="1.500"/>';
q+=hs(255,713,820);[[262,'18:00'],[392,'21:00'],[525,'00:00'],[658,'03:00'],[791,'06:00'],[924,'09:00']].forEach(a=>q+=T(a[0],716,"'"+a[1],'#888','class="a tiny"'));
q+=R(1021,709,3,8,'#aaa')+L(1021,692,1021,706,'#777')+'<path d="M1025 698l2 3-2 3-2-3z" fill="#888"/>';
document.getElementById('tick').innerHTML=q;
</script>
</body>
</html>
